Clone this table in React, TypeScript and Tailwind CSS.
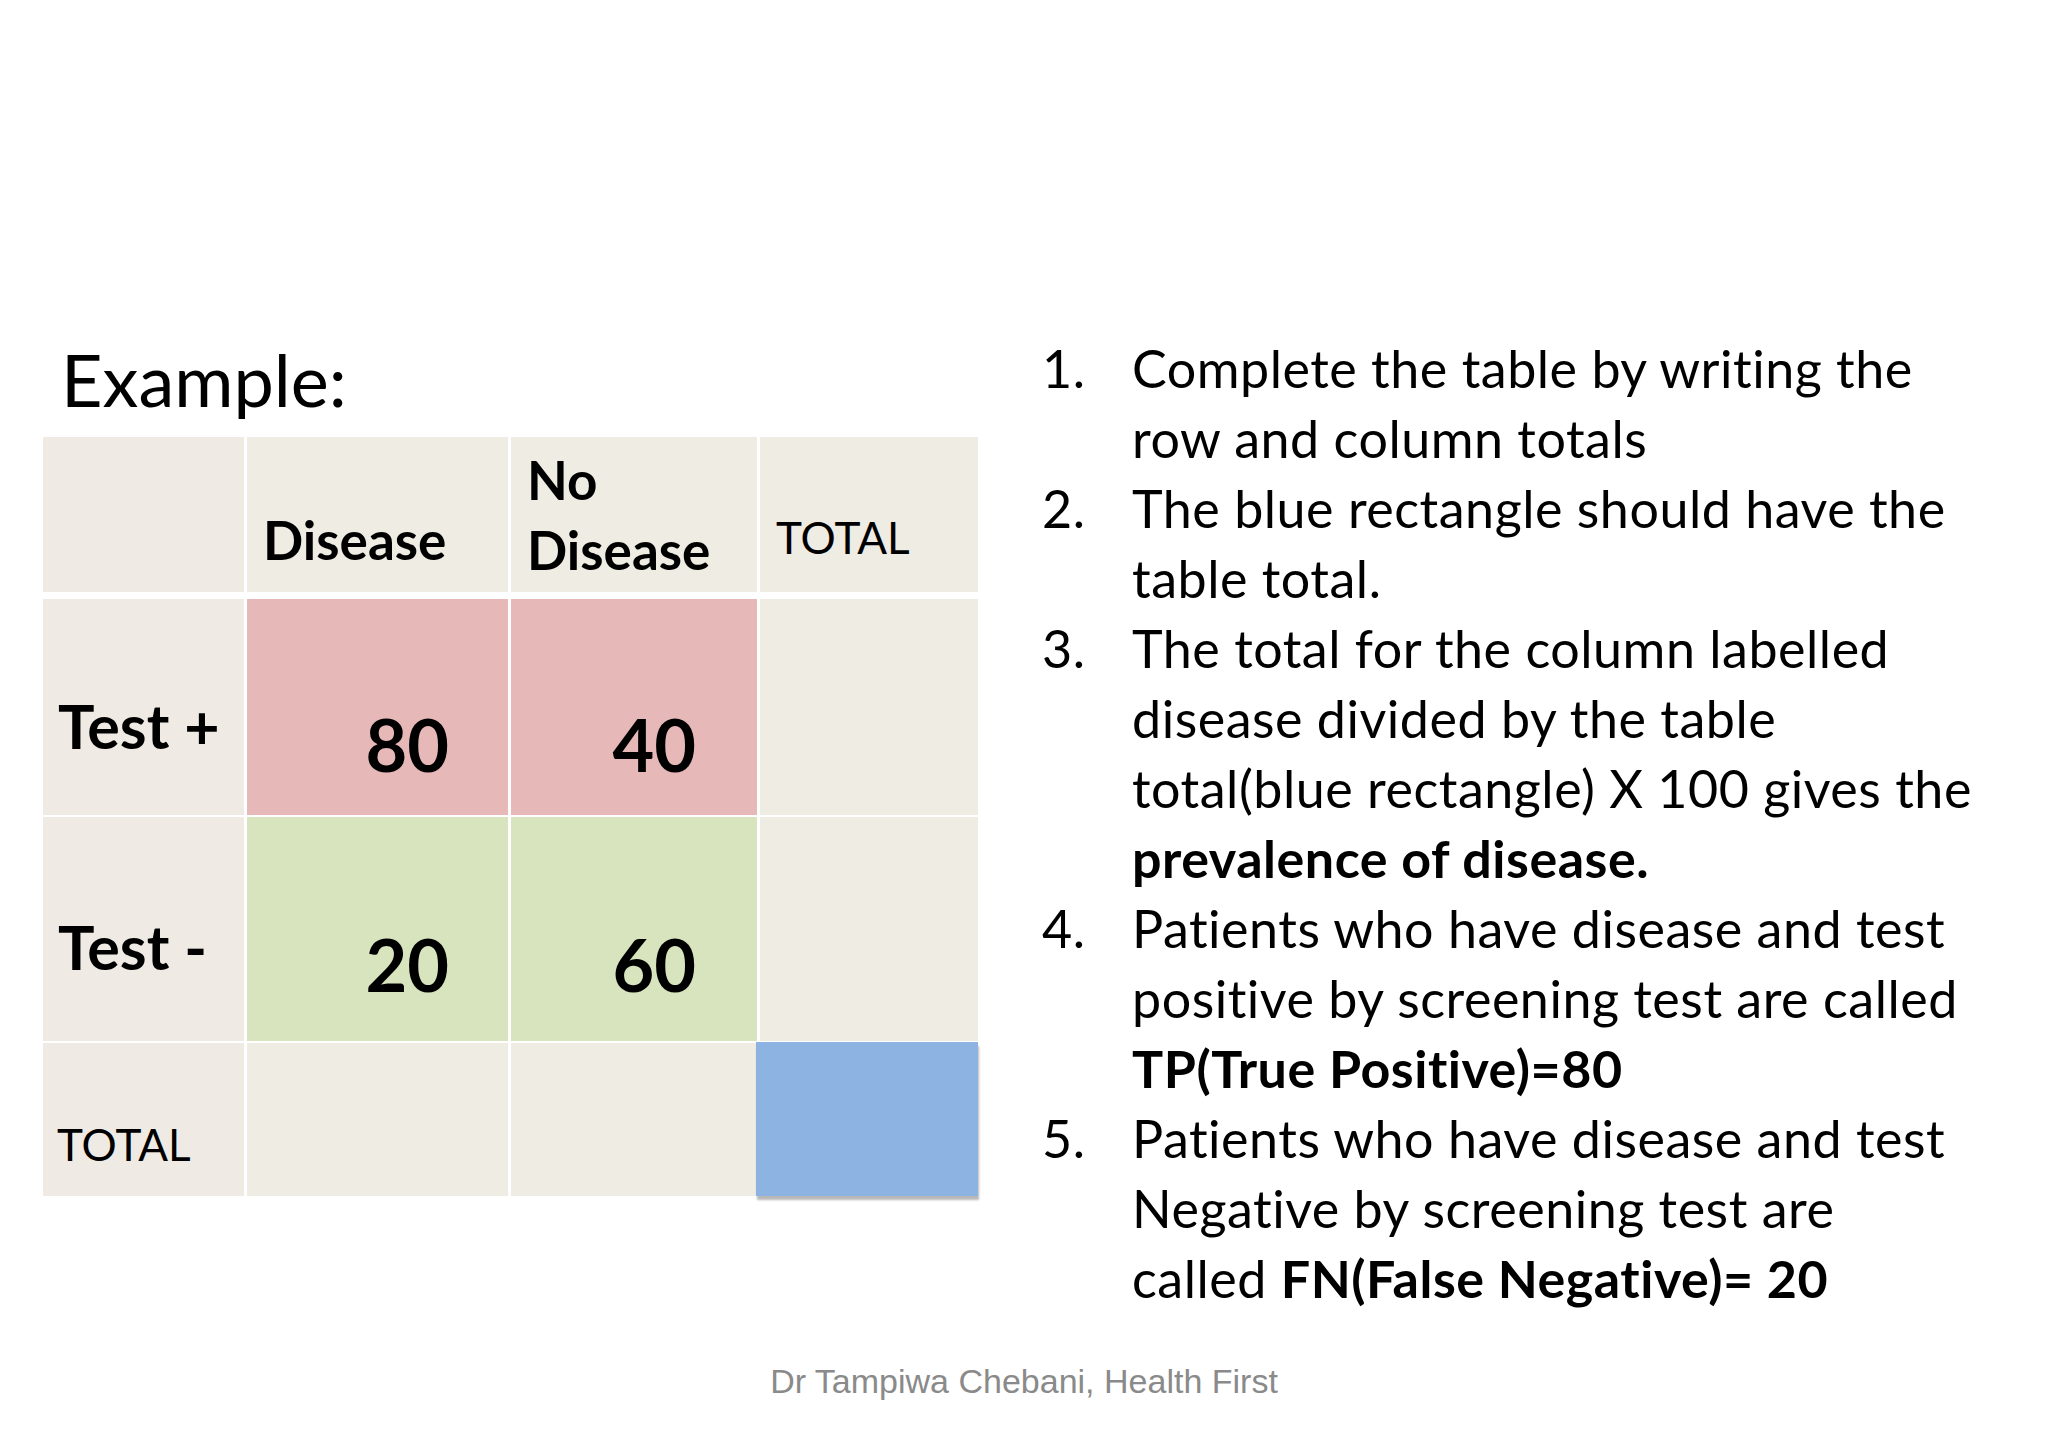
import React from "react";

const body = "font-['Lato',_'Open_Sans',_sans-serif]";

function Cell({
  className,
  children,
}: {
  className?: string;
  children?: React.ReactNode;
}) {
  return <div className={`relative ${className ?? ""}`}>{children}</div>;
}

function ContingencyTable() {
  return (
    <div className="flex flex-col w-[935px] text-black">
      {/* header */}
      <div className="flex gap-x-[3px] h-[155px]">
        <Cell className="w-[201px] bg-[#efebe4]" />
        <Cell className="w-[261px] bg-[#eeece3] pl-[16px] pt-[76px]">
          <div className="text-[53px] leading-none font-bold">Disease</div>
        </Cell>
        <Cell className="w-[246px] bg-[#eeece3] pl-[16px] pt-[8px]">
          <div className="text-[53px] leading-[70px] font-bold">
            No
            <br />
            Disease
          </div>
        </Cell>
        <Cell className="w-[218px] bg-[#eeece3] pl-[16px] pt-[78px]">
          <div className="text-[44px] leading-none">TOTAL</div>
        </Cell>
      </div>

      {/* test + */}
      <div className="flex gap-x-[3px] h-[216px] mt-[7px]">
        <Cell className="w-[201px] bg-[#efebe4] pl-[15px] pt-[96px]">
          <div className="text-[61px] leading-none font-bold whitespace-nowrap">
            Test +
          </div>
        </Cell>
        <Cell className="w-[261px] bg-[#e6b9b8] pr-[59px] pt-[109px] text-right">
          <div className="text-[72px] leading-none font-bold">80</div>
        </Cell>
        <Cell className="w-[246px] bg-[#e6b9b8] pr-[61px] pt-[109px] text-right">
          <div className="text-[72px] leading-none font-bold">40</div>
        </Cell>
        <Cell className="w-[218px] bg-[#eeece3]" />
      </div>

      {/* test - */}
      <div className="flex gap-x-[3px] h-[224px] mt-[2px]">
        <Cell className="w-[201px] bg-[#efebe4] pl-[15px] pt-[99px]">
          <div className="text-[61px] leading-none font-bold whitespace-nowrap">
            Test -
          </div>
        </Cell>
        <Cell className="w-[261px] bg-[#d8e4bd] pr-[59px] pt-[111px] text-right">
          <div className="text-[72px] leading-none font-bold">20</div>
        </Cell>
        <Cell className="w-[246px] bg-[#d8e4bd] pr-[61px] pt-[111px] text-right">
          <div className="text-[72px] leading-none font-bold">60</div>
        </Cell>
        <Cell className="w-[218px] bg-[#eeece3]" />
      </div>

      {/* totals */}
      <div className="flex gap-x-[3px] h-[153px] mt-[2px]">
        <Cell className="w-[201px] bg-[#efebe4] pl-[14px] pt-[79px]">
          <div className="text-[44px] leading-none">TOTAL</div>
        </Cell>
        <Cell className="w-[261px] bg-[#eeece3]" />
        <Cell className="w-[246px] bg-[#eeece3]" />
        <Cell className="w-[218px]">
          <div className="absolute -left-[4px] -top-[1px] right-0 bottom-0 bg-[#8db3e2] shadow-[1px_4px_2px_rgba(0,0,0,0.28)]" />
        </Cell>
      </div>
    </div>
  );
}

const steps: { n: string; lines: React.ReactNode[] }[] = [
  {
    n: "1.",
    lines: ["Complete the table by writing the", "row and column totals"],
  },
  {
    n: "2.",
    lines: ["The blue rectangle should have the", "table total."],
  },
  {
    n: "3.",
    lines: [
      "The total for the column labelled",
      "disease divided by the table",
      "total(blue rectangle) X 100 gives the",
      <b key="b">prevalence of disease.</b>,
    ],
  },
  {
    n: "4.",
    lines: [
      "Patients who have disease and test",
      "positive by screening test are called",
      <b key="b">TP(True Positive)=80</b>,
    ],
  },
  {
    n: "5.",
    lines: [
      "Patients who have disease and test",
      "Negative by screening test are",
      <span key="s">
        called <b>FN(False Negative)= 20</b>
      </span>,
    ],
  },
];

function StepList() {
  return (
    <div className="flex flex-col text-[52px] leading-[70px] tracking-[0.01em] text-black">
      {steps.map((s) => (
        <div key={s.n} className="grid grid-cols-[90px_1fr]">
          <span>{s.n}</span>
          <div className="flex flex-col">
            {s.lines.map((line, i) => (
              <span key={i} className="whitespace-nowrap">
                {line}
              </span>
            ))}
          </div>
        </div>
      ))}
    </div>
  );
}

export default function App() {
  return (
    <div className={`w-[2048px] h-[1449px] bg-white flex flex-col ${body}`}>
      <div className="flex pt-[333px]">
        <div className="ml-[43px] pt-[10px] flex flex-col">
          <h1 className="text-[72px] leading-none pl-[18px] h-[94px] font-normal">
            Example:
          </h1>
          <ContingencyTable />
        </div>
        <div className="ml-[64px]">
          <StepList />
        </div>
      </div>
      <div className="mt-auto pb-[51px] text-center text-[34px] leading-none text-[#8a8a8a] font-['Liberation_Sans',_Arial,_sans-serif]">
        Dr Tampiwa Chebani, Health First
      </div>
    </div>
  );
}
